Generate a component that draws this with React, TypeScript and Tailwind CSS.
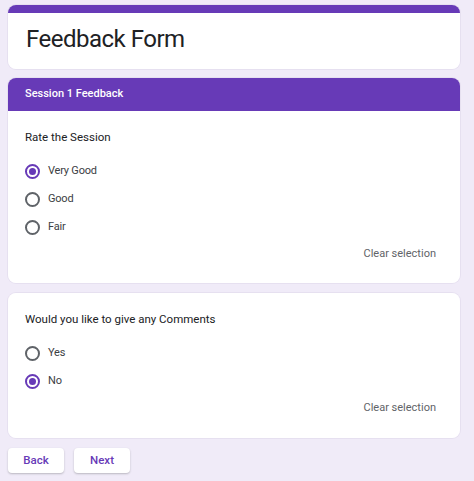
import React, { useState } from 'react';

const font = { fontFamily: 'Roboto, "Liberation Sans", sans-serif' };

type RadioProps = { label: string; checked: boolean; onSelect: () => void };

const Radio: React.FC<RadioProps> = ({ label, checked, onSelect }) => (
  <button type="button" onClick={onSelect} className="flex h-[28px] items-center gap-[8px] text-left">
    <span
      className={
        'flex h-[15px] w-[15px] items-center justify-center rounded-full border-2 ' +
        (checked ? 'border-[#673ab7]' : 'border-[#5f6368]')
      }
    >
      {checked && <span className="h-[7px] w-[7px] rounded-full bg-[#673ab7]" />}
    </span>
    <span className="text-[11px] tracking-[-0.2px] text-[#3c4043]">{label}</span>
  </button>
);

type QuestionProps = {
  title: string;
  options: string[];
  value: string | null;
  onChange: (v: string | null) => void;
  rounded?: string;
  bottom: string;
};

const Question: React.FC<QuestionProps> = ({ title, options, value, onChange, rounded, bottom }) => (
  <div className={'bg-white px-[17px] pt-[16px] ' + bottom + ' ' + (rounded ?? 'rounded-lg')}>
    <p className="mb-[10px] h-[20px] text-[11.5px] leading-[20px] text-[#202124]">{title}</p>
    <div className="flex flex-col">
      {options.map((o) => (
        <Radio key={o} label={o} checked={value === o} onSelect={() => onChange(o)} />
      ))}
    </div>
    <div className="mt-[5px] flex justify-end pr-[7px]">
      <button
        type="button"
        onClick={() => onChange(null)}
        className="h-[16px] text-[11px] leading-[16px] text-[#5f6368]"
      >
        Clear selection
      </button>
    </div>
  </div>
);

export default function App() {
  const [rating, setRating] = useState<string | null>('Very Good');
  const [comments, setComments] = useState<string | null>('No');

  return (
    <div className="min-h-[481px] w-[474px] bg-[#f0ebf8] pt-[5px] pl-2" style={font}>
      <div className="flex w-[452px] flex-col">
        {/* Header */}
        <div className="overflow-hidden rounded-lg shadow-[0_0_0_1px_#e6e0f0]">
          <div className="h-[8px] bg-[#673ab7]" />
          <div className="flex h-[56px] items-center bg-white px-[18px] pb-[5px]">
            <h1 className="text-[24px] tracking-[-0.5px] text-[#202124]">Feedback Form</h1>
          </div>
        </div>

        {/* Session section */}
        <div className="mt-[9px] overflow-hidden rounded-lg shadow-[0_0_0_1px_#e6e0f0]">
          <div className="flex h-[33px] items-center bg-[#673ab7] px-[17px]">
            <span className="text-[11px] font-medium text-white">Session 1 Feedback</span>
          </div>
          <Question
            title="Rate the Session"
            options={['Very Good', 'Good', 'Fair']}
            value={rating}
            onChange={setRating}
            rounded="rounded-none"
            bottom="pb-[21px]"
          />
        </div>

        <div className="mt-[10px] rounded-lg shadow-[0_0_0_1px_#e6e0f0]">
          <Question
            title="Would you like to give any Comments"
            options={['Yes', 'No']}
            value={comments}
            onChange={setComments}
            bottom="pb-[22px]"
          />
        </div>

        {/* Navigation */}
        <div className="mt-[10px] flex gap-[10px]">
          <button
            type="button"
            className="h-[25px] w-[56px] rounded bg-white text-[11.5px] font-medium text-[#673ab7] shadow-[0_1px_2px_rgba(60,64,67,0.3)]"
          >
            Back
          </button>
          <button
            type="button"
            className="h-[25px] w-[56px] rounded bg-white text-[11.5px] font-medium text-[#673ab7] shadow-[0_1px_2px_rgba(60,64,67,0.3)]"
          >
            Next
          </button>
        </div>
      </div>
    </div>
  );
}
